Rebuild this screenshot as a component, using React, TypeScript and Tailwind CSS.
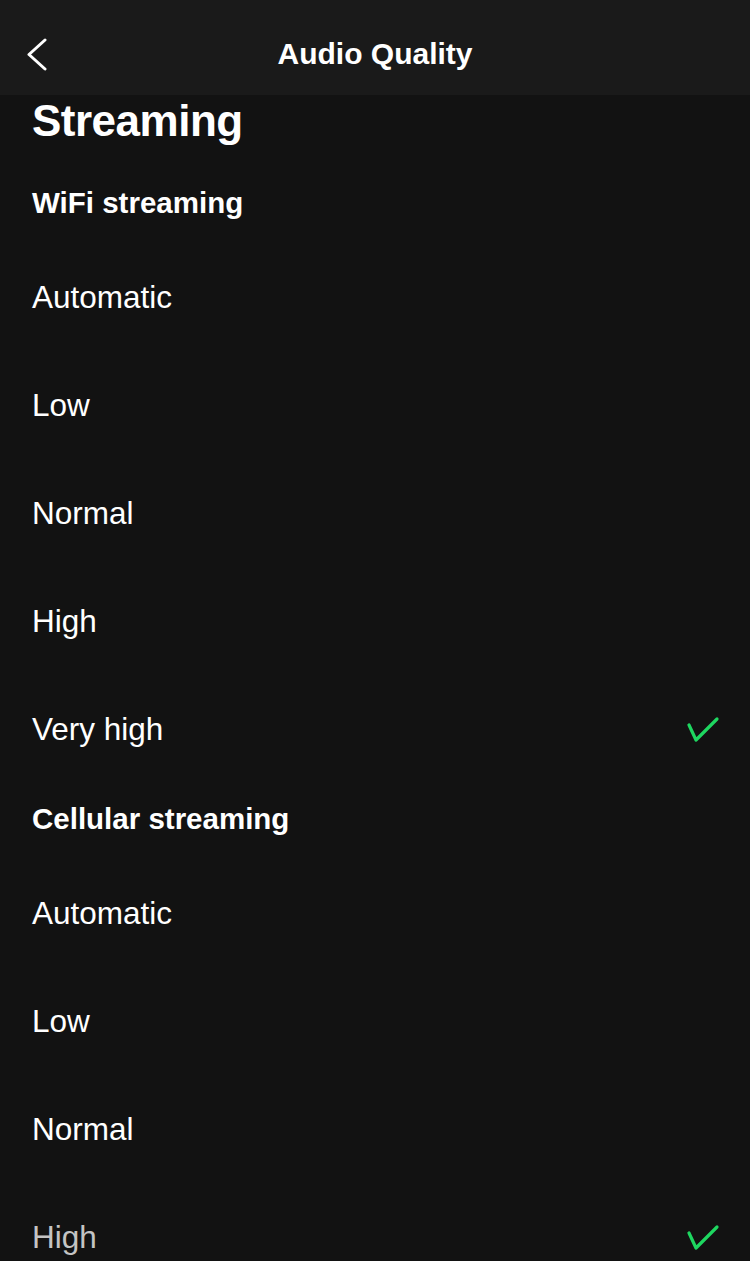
import React from "react";

type Option = { label: string; selected?: boolean; dim?: boolean };

const wifiOptions: Option[] = [
  { label: "Automatic" },
  { label: "Low" },
  { label: "Normal" },
  { label: "High" },
  { label: "Very high", selected: true },
];

const cellularOptions: Option[] = [
  { label: "Automatic" },
  { label: "Low" },
  { label: "Normal" },
  { label: "High", selected: true, dim: true },
];

function Check() {
  return (
    <svg width="34" height="28" viewBox="0 0 34 28" fill="none">
      <polyline
        points="3,9 10,24 31,3"
        stroke="#1ed760"
        strokeWidth="3.2"
        strokeLinecap="round"
        strokeLinejoin="round"
      />
    </svg>
  );
}

function OptionRow({ option }: { option: Option }) {
  return (
    <div className="h-[108px] flex items-center justify-between">
      <span
        className={`text-[31.5px] ${option.dim ? "text-[#c4c4c4]" : "text-white"}`}>
        {option.label}
      </span>
      {option.selected && (
        <div className="mr-[-2px]">
          <Check />
        </div>
      )}
    </div>
  );
}

function Section({ title, options }: { title: string; options: Option[] }) {
  return (
    <div>
      <div className="h-[76px] pb-[6px] flex items-center">
        <h2 className="text-[29.5px] font-bold text-white">{title}</h2>
      </div>
      {options.map((o, i) => (
        <OptionRow key={i} option={o} />
      ))}
    </div>
  );
}

export default function App() {
  return (
    <div
      className="h-[1261px] overflow-hidden bg-[#121212]"
      style={{ fontFamily: '"Liberation Sans", Arial, sans-serif' }}>
      {/* Header */}
      <div className="h-[95px] pt-[12px] bg-[#1a1a1a] flex items-center relative">
        <div className="absolute left-[26px] top-[38px]">
          <svg width="22" height="33" viewBox="0 0 22 33" fill="none">
            <polyline
              points="19,2 3,16.5 19,31"
              stroke="white"
              strokeWidth="3"
              strokeLinecap="round"
              strokeLinejoin="round"
            />
          </svg>
        </div>
        <h1 className="w-full text-center text-[30px] font-bold text-white">
          Audio Quality
        </h1>
      </div>

      {/* Content */}
      <div className="px-8">
        <div className="h-[73px] pb-[21px] flex items-center">
          <h1 className="text-[44px] font-bold text-white tracking-[-0.5px]">
            Streaming
          </h1>
        </div>
        <Section title="WiFi streaming" options={wifiOptions} />
        <Section title="Cellular streaming" options={cellularOptions} />
      </div>
    </div>
  );
}
